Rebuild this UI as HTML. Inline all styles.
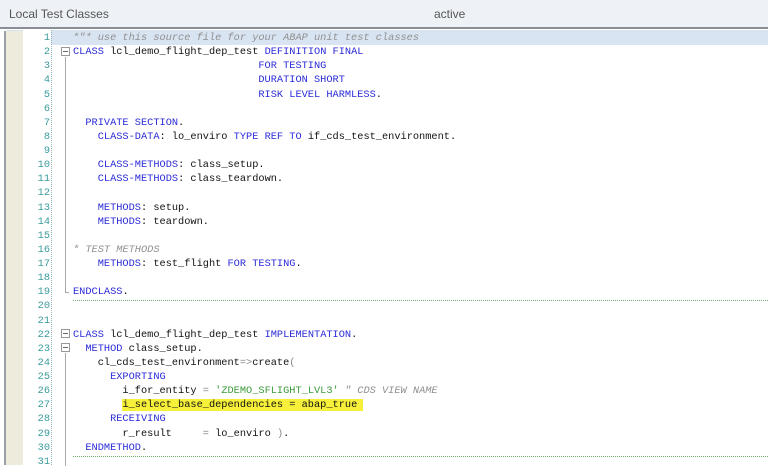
<!DOCTYPE html>
<html><head><meta charset="utf-8"><style>
*{margin:0;padding:0;box-sizing:border-box}
body{width:768px;height:465px;overflow:hidden;background:#fff;font-family:"Liberation Sans",sans-serif;position:relative}
.hdr{position:absolute;left:0;top:0;width:768px;height:29px;background:#eef2f7;border-bottom:2px solid #8a8f96}
.hdr span{position:absolute;top:7px;font-size:12px;color:#555}
.lb{position:absolute;left:4px;top:31px;width:2px;height:434px;background:#9aa0a8}
.gut{position:absolute;left:6px;top:31px;width:17px;height:434px;background:#efebdc}
.cur{position:absolute;left:6px;top:30px;width:762px;height:15px;background:#d9e4f2}
.cur2{position:absolute;left:23px;top:30px;width:28px;height:15px;background:#fff}
.nums{position:absolute;left:23px;top:31px;width:27px;font-family:"Liberation Mono",monospace;font-size:10.3px;line-height:14.13px;color:#3a9a9a;text-align:right}
.dl{position:absolute;left:51px;top:30px;height:435px;border-left:1px dotted #8fb8b8}
pre{position:absolute;left:73px;top:31px;font-family:"Liberation Mono",monospace;font-size:10.3px;line-height:14.13px;color:#111}
.k{color:#2a2ad8}.c{color:#909090;font-style:italic}.s{color:#3a9a3a}.o{color:#888}
.hl{background:#f6f03a}
.sep{position:absolute;left:73px;width:695px;border-top:1px dotted #6aaa6a}
.fold{position:absolute;left:61px;width:9px;height:9px;border:1px solid #999;background:#fff}
.fold:after{content:"";position:absolute;left:1px;top:3px;width:5px;height:1px;background:#666}
.vl{position:absolute;left:65px;border-left:1px solid #aaa}
</style></head><body>
<div class="hdr"><span style="left:9px">Local Test Classes</span><span style="left:434px">active</span></div>
<div class="cur"></div>
<div class="lb"></div><div class="gut"></div><div class="cur2"></div>
<div class="nums">1<br>2<br>3<br>4<br>5<br>6<br>7<br>8<br>9<br>10<br>11<br>12<br>13<br>14<br>15<br>16<br>17<br>18<br>19<br>20<br>21<br>22<br>23<br>24<br>25<br>26<br>27<br>28<br>29<br>30<br>31</div>
<div class="dl"></div>
<div class="fold" style="top:47px"></div>
<div class="vl" style="top:57px;height:236px"></div>
<div class="vl" style="top:292px;width:4px;border-bottom:1px solid #aaa;height:1px"></div>
<div class="fold" style="top:329px"></div>
<div class="fold" style="top:343px"></div>
<div class="vl" style="top:353px;height:113px"></div>
<div class="sep" style="top:300px"></div>
<div class="sep" style="top:456px"></div>
<pre><span class="c">*"* use this source file for your ABAP unit test classes</span>
<span class="k">CLASS</span> lcl_demo_flight_dep_test <span class="k">DEFINITION FINAL</span>
                              <span class="k">FOR TESTING</span>
                              <span class="k">DURATION SHORT</span>
                              <span class="k">RISK LEVEL HARMLESS</span>.

  <span class="k">PRIVATE SECTION</span>.
    <span class="k">CLASS-DATA</span>: lo_enviro <span class="k">TYPE REF TO</span> if_cds_test_environment.

    <span class="k">CLASS-METHODS</span>: class_setup.
    <span class="k">CLASS-METHODS</span>: class_teardown.

    <span class="k">METHODS</span>: setup.
    <span class="k">METHODS</span>: teardown.

<span class="c">* TEST METHODS</span>
    <span class="k">METHODS</span>: test_flight <span class="k">FOR TESTING</span>.

<span class="k">ENDCLASS</span>.


<span class="k">CLASS</span> lcl_demo_flight_dep_test <span class="k">IMPLEMENTATION</span>.
  <span class="k">METHOD</span> class_setup.
    cl_cds_test_environment<span class="o">=&gt;</span>create<span class="o">(</span>
      <span class="k">EXPORTING</span>
        i_for_entity <span class="o">=</span> <span class="s">'ZDEMO_SFLIGHT_LVL3'</span> <span class="c">" CDS VIEW NAME</span>
        <span class="hl">i_select_base_dependencies = abap_true </span>
      <span class="k">RECEIVING</span>
        r_result     <span class="o">=</span> lo_enviro <span class="o">)</span>.
  <span class="k">ENDMETHOD</span>.
</pre>
</body></html>
